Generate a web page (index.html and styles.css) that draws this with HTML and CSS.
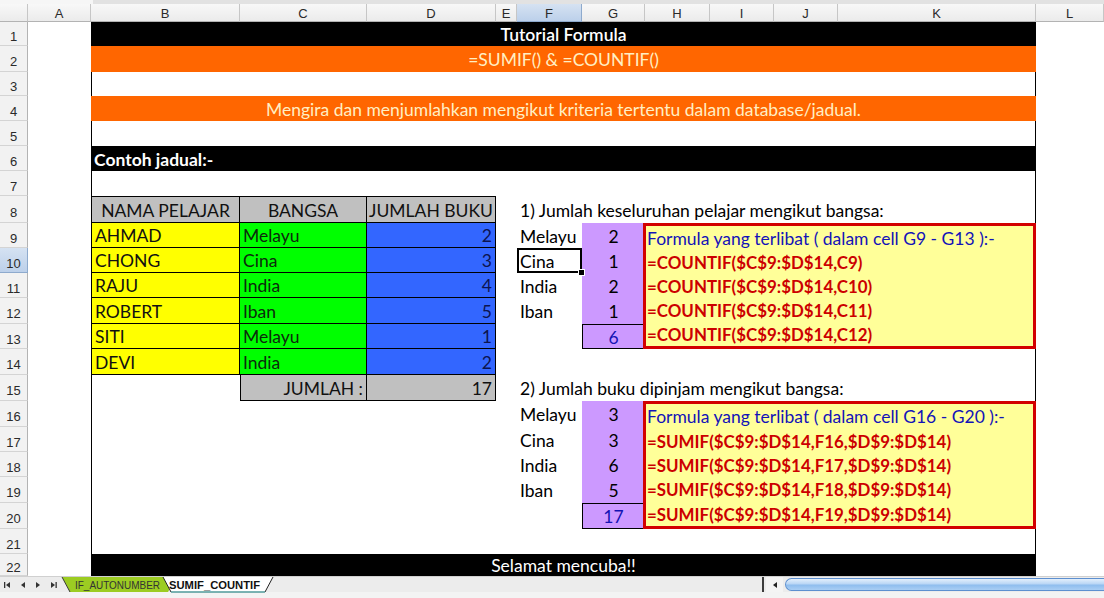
FILE: index.html
```html
<!DOCTYPE html>
<html>
<head>
<meta charset="utf-8">
<link rel="stylesheet" href="styles.css">
</head>
<body>
<div class="topstrip"><div class="ts-left"></div></div>
<div class="sheet">
  <div class="corner"></div>
  <div class="ch">A</div><div class="ch">B</div><div class="ch">C</div><div class="ch">D</div><div class="ch">E</div><div class="ch sel">F</div><div class="ch">G</div><div class="ch">H</div><div class="ch">I</div><div class="ch">J</div><div class="ch">K</div><div class="ch">L</div>

  <div class="rh">1</div><div class="c"></div><div class="c s10 black center title">Tutorial Formula</div><div class="c"></div>
  <div class="rh">2</div><div class="c"></div><div class="c s10 orange center">=SUMIF() &amp; =COUNTIF()</div><div class="c"></div>
  <div class="rh">3</div><div class="c"></div><div class="c s10 lb rb"></div><div class="c"></div>
  <div class="rh">4</div><div class="c"></div><div class="c s10 orange center">Mengira dan menjumlahkan mengikut kriteria tertentu dalam database/jadual.</div><div class="c"></div>
  <div class="rh">5</div><div class="c"></div><div class="c s10 lb rb"></div><div class="c"></div>
  <div class="rh">6</div><div class="c"></div><div class="c s10 black bold">Contoh jadual:-</div><div class="c"></div>
  <div class="rh">7</div><div class="c"></div><div class="c s10 lb rb"></div><div class="c"></div>

  <div class="rh">8</div><div class="c"></div>
  <div class="c th lb bt center">NAMA PELAJAR</div><div class="c th bt center">BANGSA</div><div class="c th bt center">JUMLAH BUKU</div>
  <div class="c"></div><div class="c s6 rb">1) Jumlah keseluruhan pelajar mengikut bangsa:</div><div class="c"></div>

  <div class="rh">9</div><div class="c"></div>
  <div class="c td lb yellow">AHMAD</div><div class="c td green">Melayu</div><div class="c td blue right">2</div>
  <div class="c"></div><div class="c">Melayu</div><div class="c purple center">2</div><div class="c"></div>

  <div class="rh sel">10</div><div class="c"></div>
  <div class="c td lb yellow">CHONG</div><div class="c td green">Cina</div><div class="c td blue right">3</div>
  <div class="c"></div><div class="c active">Cina</div><div class="c purple center">1</div><div class="c"></div>

  <div class="rh">11</div><div class="c"></div>
  <div class="c td lb yellow">RAJU</div><div class="c td green">India</div><div class="c td blue right">4</div>
  <div class="c"></div><div class="c">India</div><div class="c purple center">2</div><div class="c"></div>

  <div class="rh">12</div><div class="c"></div>
  <div class="c td lb yellow">ROBERT</div><div class="c td green">Iban</div><div class="c td blue right">5</div>
  <div class="c"></div><div class="c">Iban</div><div class="c purple center">1</div><div class="c"></div>

  <div class="rh">13</div><div class="c"></div>
  <div class="c td lb yellow">SITI</div><div class="c td green">Melayu</div><div class="c td blue right">1</div>
  <div class="c"></div><div class="c"></div><div class="c purple center total">6</div><div class="c"></div>

  <div class="box box1">
    <div class="fl head">Formula yang terlibat ( dalam cell G9 - G13 ):-</div>
    <div class="fl">=COUNTIF($C$9:$D$14,C9)</div>
    <div class="fl">=COUNTIF($C$9:$D$14,C10)</div>
    <div class="fl">=COUNTIF($C$9:$D$14,C11)</div>
    <div class="fl">=COUNTIF($C$9:$D$14,C12)</div>
  </div>

  <div class="rh">14</div><div class="c"></div>
  <div class="c td lb yellow">DEVI</div><div class="c td green">India</div><div class="c td blue right">2</div>
  <div class="c"></div><div class="c"></div><div class="c"></div><div class="c s4 rb"></div><div class="c"></div>

  <div class="rh">15</div><div class="c"></div>
  <div class="c lb"></div><div class="c td th ll right">JUMLAH :</div><div class="c td th right">17</div>
  <div class="c"></div><div class="c s6 rb">2) Jumlah buku dipinjam mengikut bangsa:</div><div class="c"></div>

  <div class="rh">16</div><div class="c"></div><div class="c s4 lb"></div>
  <div class="c">Melayu</div><div class="c purple center">3</div><div class="c"></div>
  <div class="rh">17</div><div class="c"></div><div class="c s4 lb"></div>
  <div class="c">Cina</div><div class="c purple center">3</div><div class="c"></div>
  <div class="rh">18</div><div class="c"></div><div class="c s4 lb"></div>
  <div class="c">India</div><div class="c purple center">6</div><div class="c"></div>
  <div class="rh">19</div><div class="c"></div><div class="c s4 lb"></div>
  <div class="c">Iban</div><div class="c purple center">5</div><div class="c"></div>
  <div class="rh">20</div><div class="c"></div><div class="c s4 lb"></div>
  <div class="c"></div><div class="c purple center total">17</div><div class="c"></div>

  <div class="box box2">
    <div class="fl head">Formula yang terlibat ( dalam cell G16 - G20 ):-</div>
    <div class="fl">=SUMIF($C$9:$D$14,F16,$D$9:$D$14)</div>
    <div class="fl">=SUMIF($C$9:$D$14,F17,$D$9:$D$14)</div>
    <div class="fl">=SUMIF($C$9:$D$14,F18,$D$9:$D$14)</div>
    <div class="fl">=SUMIF($C$9:$D$14,F19,$D$9:$D$14)</div>
  </div>

  <div class="rh">21</div><div class="c"></div><div class="c s10 lb rb"></div><div class="c"></div>
  <div class="rh">22</div><div class="c"></div><div class="c s10 black center">Selamat mencuba!!</div><div class="c"></div>
</div>

<div class="tabbar">
  <div class="nav">
    <svg width="60" height="16" viewBox="0 0 60 16">
      <rect x="4" y="5" width="1.3" height="6" fill="#333"/>
      <polygon points="10,5 10,11 6,8" fill="#333"/>
      <polygon points="25,5 25,11 21,8" fill="#333"/>
      <polygon points="36,5 36,11 40,8" fill="#333"/>
      <polygon points="51,5 51,11 55,8" fill="#333"/>
      <rect x="55.5" y="5" width="1.3" height="6" fill="#333"/>
    </svg>
  </div>
  <div class="tabs">
    <svg width="220" height="16" viewBox="0 0 220 16">
      <polygon points="2,0 116,0 108,15 10,15" fill="#9ccc22"/>
      <line x1="2" y1="0" x2="10" y2="15" stroke="#3a3a3a" stroke-width="1"/>
      <text x="15" y="12" class="tabtxt" textLength="85" lengthAdjust="spacingAndGlyphs">IF_AUTONUMBER</text>
      <polygon points="103,0 213,0 205,15 111,15" fill="#ffffff"/>
      <line x1="103" y1="0" x2="111" y2="15" stroke="#222" stroke-width="1"/>
      <line x1="205" y1="15" x2="213" y2="0" stroke="#222" stroke-width="1"/>
      <line x1="111" y1="15" x2="205" y2="15" stroke="#4f9a9a" stroke-width="1.5"/>
      <text x="109" y="12" class="tabtxt act" textLength="91" lengthAdjust="spacingAndGlyphs">SUMIF_COUNTIF</text>
    </svg>
  </div>
  <div class="tabfill"></div>
  <div class="hscroll">
    <div class="hsep"></div>
    <div class="harrow">
      <svg width="8" height="8" viewBox="0 0 8 8"><polygon points="6,1 6,7 2,4" fill="#222"/></svg>
    </div>
    <div class="thumb"></div>
  </div>
</div>
<div class="status"></div>
</body>
</html>
```

FILE: styles.css
```css
* { box-sizing: border-box; margin: 0; padding: 0; }
html, body { width: 1104px; height: 598px; overflow: hidden; background: #fff; }
body { font-family: Lato, "Liberation Sans", sans-serif; color: #000; }

.topstrip { height: 4px; background: #e2e2e2; display: flex; }
.ts-left { width: 93px; background: #f6f6f6; }

.sheet {
  display: grid;
  grid-template-columns: 28px 63px 149px 127px 129px 21px 65px 63px 65px 64px 64px 198px 68px;
  grid-template-rows: 18px 24px 26px 24px 25px 25px 25px 25px 27px 25px 25px 25px 26px 25px 26px 26px 26px 25px 25px 26px 26px 25px 22px;
  height: 572px;
  overflow: hidden;
  font-size: 17.5px;
}

.corner, .ch {
  background: linear-gradient(#f8f8f8, #ebebeb);
  border-right: 1px solid #c6c6c6;
  border-bottom: 1px solid #b3b3b3;
}
.ch {
  font: 13px "Liberation Sans", Arial, sans-serif;
  color: #2a2a2a;
  display: flex; align-items: center; justify-content: center;
  padding-top: 1px;
}
.rh {
  background: #f2f2f2;
  border-right: 1px solid #b3b3b3;
  border-bottom: 1px solid #d4d4d4;
  font: 13px "Liberation Sans", Arial, sans-serif;
  color: #2a2a2a;
  display: flex; align-items: center; justify-content: center;
  padding-top: 6px;
}
.ch.sel, .rh.sel { background: linear-gradient(#d5e2f2, #bcd0ea); border-color: #8eaacd; }

.c {
  display: flex; align-items: center;
  padding: 1px 3px 0 3px;
  white-space: nowrap;
  min-width: 0;
}
.s4 { grid-column: span 4; }
.s6 { grid-column: span 6; }
.s10 { grid-column: span 10; }
.center { justify-content: center; }
.right { justify-content: flex-end; }
.bold { font-weight: 700; }
.lb { border-left: 1px solid #000; }
.rb { border-right: 1px solid #000; }
.bt { border-top: 1px solid #000; }
.ll { border-left: 1px solid #000; }

.black { background: #000; color: #fff; }
.title { font-weight: 600; }
.orange { background: #ff6600; color: #ffefc4; }

.th { background: #c0c0c0; color: #111; border-right: 1px solid #000; border-bottom: 1px solid #000; }
.td { border-right: 1px solid #000; border-bottom: 1px solid #000; }
.yellow { background: #ffff00; color: #111; }
.green { background: #00ff00; color: #0c2a0c; }
.blue { background: #3366ff; color: #0c1450; }
.purple { background: #cc99ff; }
.total { border: 1px solid #000; color: #1414b4; }

.active { box-shadow: inset 0 0 0 2px #000; position: relative; }
.active::after {
  content: ""; position: absolute; right: -3px; bottom: -3px;
  width: 5px; height: 5px; background: #000; border: 1px solid #fff;
}

.box {
  grid-column: 9 / 13;
  margin-left: -2px;
  background: #ffff99;
  border: 3px solid #d20000;
  display: flex; flex-direction: column;
  z-index: 1;
}
.box1 { grid-row: 10 / 15; }
.box2 { grid-row: 17 / 22; }
.fl {
  flex: 1;
  display: flex; align-items: center;
  padding: 1px 0 0 1px;
  color: #cc0000;
  font-size: 16.9px;
  font-weight: 700;
  white-space: nowrap;
}
.fl.head { color: #1313b8; font-weight: 400; font-size: 17.5px; }

.tabbar {
  height: 16px;
  display: flex;
  background: #ececec;
  border-top: 1px solid #d0d0d0;
}
.nav { width: 60px; display: flex; }
.tabs { width: 220px; display: flex; }
.tabtxt { font: 11px "Liberation Sans", Arial, sans-serif; fill: #333; }
.tabtxt.act { font-weight: 700; fill: #111; }
.tabfill { flex: 1; }
.hscroll { width: 342px; display: flex; align-items: stretch; }
.hsep { width: 2px; background: #3c3c3c; margin: 0 2px 0 0; }
.harrow { width: 17px; display: flex; align-items: center; justify-content: center; background: #f4f4f4; }
.thumb {
  flex: 1;
  margin: 1px 0 1px 2px;
  border: 1px solid #5d8fcf;
  border-right: none;
  border-radius: 7px 0 0 7px;
  background: linear-gradient(#e3effc, #b9d6f5 45%, #8fbdee 55%, #a9cef4);
}
.status { height: 6px; background: #f3f3f3; }
```
